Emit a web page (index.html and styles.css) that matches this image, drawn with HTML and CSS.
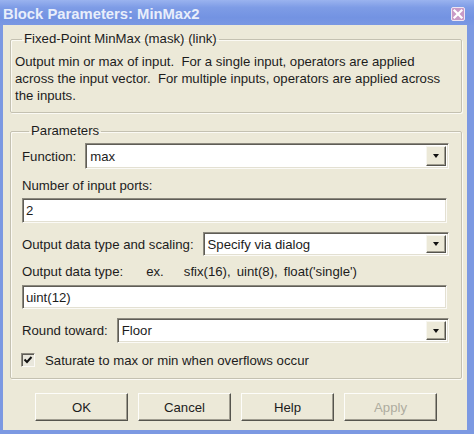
FILE: index.html
```html
<!DOCTYPE html>
<html>
<head>
<meta charset="utf-8">
<link rel="stylesheet" href="styles.css">
</head>
<body>
<div class="window">
  <div class="titlebar">
    <span class="title">Block Parameters: MinMax2</span>
    <span class="close"><svg width="12" height="12" viewBox="0 0 12 12"><path d="M2.5 2.5 L9.5 9.5 M9.5 2.5 L2.5 9.5" stroke="#ffffff" stroke-width="2.2" stroke-linecap="square"/></svg></span>
  </div>
  <div class="client">
    <fieldset class="group group-desc">
      <legend>Fixed-Point MinMax (mask) (link)</legend>
      <p class="desc">Output min or max of input.&nbsp; For a single input, operators are applied<br>across the input vector.&nbsp; For multiple inputs, operators are applied across<br>the inputs.</p>
    </fieldset>
    <fieldset class="group group-params">
      <legend>Parameters</legend>
      <div class="row row-func">
        <span class="lbl">Function:</span>
        <div class="select"><span class="val">max</span><span class="dd"><span class="tri"></span></span></div>
      </div>
      <div class="lbl-line lbl-ports">Number of input ports:</div>
      <div class="input input-ports">2</div>
      <div class="row row-scaling">
        <span class="lbl">Output data type and scaling:</span>
        <div class="select"><span class="val">Specify via dialog</span><span class="dd"><span class="tri"></span></span></div>
      </div>
      <div class="lbl-line lbl-type"><span>Output data type:</span><span class="ex">ex.</span><span class="ex2">sfix(16),</span><span class="ex3">uint(8),</span><span class="ex3">float('single')</span></div>
      <div class="input input-type">uint(12)</div>
      <div class="row row-round">
        <span class="lbl">Round toward:</span>
        <div class="select"><span class="val">Floor</span><span class="dd"><span class="tri"></span></span></div>
      </div>
      <div class="check-row">
        <span class="check"><svg width="10" height="10" viewBox="0 0 10 10"><path d="M1.5 4.5 L4 7 L8.5 2" fill="none" stroke="#111" stroke-width="2"/></svg></span>
        <span class="check-lbl">Saturate to max or min when overflows occur</span>
      </div>
    </fieldset>
    <div class="buttons">
      <span class="btn">OK</span>
      <span class="btn">Cancel</span>
      <span class="btn">Help</span>
      <span class="btn disabled">Apply</span>
    </div>
  </div>
</div>
</body>
</html>
```
FILE: styles.css
```css
html, body {
  margin: 0;
  padding: 0;
}
body {
  width: 474px;
  height: 434px;
  overflow: hidden;
  font-family: "Liberation Sans", Arial, sans-serif;
  font-size: 13.2px;
  color: #1c1c1c;
}
.window {
  width: 474px;
  height: 434px;
  box-sizing: border-box;
  display: flex;
  flex-direction: column;
  background: #7c99e2;
}
.titlebar {
  height: 25px;
  flex: none;
  display: flex;
  align-items: center;
  justify-content: space-between;
  padding: 0 9px 0 3px;
  background: linear-gradient(#9ab3ef 0%, #7e9ce6 30%, #7393e2 70%, #7a98e3 100%);
}
.title {
  font-weight: bold;
  font-size: 14.8px;
  color: #e8eefb;
  letter-spacing: 0;
  margin-top: 2px;
}
.close {
  width: 14px;
  height: 14px;
  box-sizing: border-box;
  border: 1px solid #efe6f2;
  border-radius: 2px;
  background: #c99ac6;
  display: flex;
  align-items: center;
  justify-content: center;
  margin-top: 3px;
}
.client {
  flex: 1;
  margin: 0 7px 4px 3px;
  background: #ece9d8;
  padding: 6px 5px 0 7px;
  display: flex;
  flex-direction: column;
}
.group {
  margin: 0;
  border: 1px solid #c4c1b1;
  box-shadow: inset 1px 1px 0 #fbfaf4, 1px 1px 0 #fbfaf4;
  border-radius: 2px;
  min-width: 0;
}
.group legend {
  margin-left: 7px;
  padding: 0 2px;
  line-height: 16px;
  color: #1c1c1c;
}
.group-desc {
  padding: 6px 4px 8px 4px;
}
.desc {
  margin: 0;
  line-height: 17px;
  white-space: nowrap;
}
.group-params {
  margin-top: 10px;
  padding: 4px 12px 10px 11px;
}
.row {
  display: flex;
  align-items: center;
  gap: 9px;
}
.row-func { height: 26px; }
.row-scaling { height: 24px; margin-top: 9px; }
.row-round { height: 25px; margin-top: 9px; }
.lbl { flex: none; white-space: nowrap; }
.select {
  flex: 1;
  height: 100%;
  box-sizing: border-box;
  display: flex;
  align-items: center;
  background: #ffffff;
  border-top: 1px solid #8c897e;
  border-left: 1px solid #8c897e;
  border-right: 1px solid #fbfaf6;
  border-bottom: 1px solid #fbfaf6;
  box-shadow: inset 1px 1px 0 #5f5d56, inset -1px -1px 0 #e3e0d2;
  padding: 2px;
}
.select .val {
  flex: 1;
  padding-left: 2px;
  white-space: nowrap;
}
.dd {
  flex: none;
  width: 20px;
  height: 100%;
  box-sizing: border-box;
  background: #ece9d8;
  border-top: 1px solid #f7f6f0;
  border-left: 1px solid #f7f6f0;
  border-right: 1px solid #55544d;
  border-bottom: 1px solid #55544d;
  box-shadow: inset -1px -1px 0 #a09d90;
  display: flex;
  align-items: center;
  justify-content: center;
}
.tri {
  width: 0;
  height: 0;
  border-left: 3.5px solid transparent;
  border-right: 3.5px solid transparent;
  border-top: 4px solid #111;
}
.lbl-line {
  line-height: 16px;
  white-space: nowrap;
}
.lbl-ports { margin-top: 9px; }
.lbl-type { margin-top: 8px; display: flex; }
.lbl-type .ex { margin-left: 23px; }
.lbl-type .ex2 { margin-left: 20px; }
.lbl-type .ex3 { margin-left: 6px; }
.input {
  box-sizing: border-box;
  margin-right: 2px;
  background: #ffffff;
  border-top: 1px solid #8c897e;
  border-left: 1px solid #8c897e;
  border-right: 1px solid #fbfaf6;
  border-bottom: 1px solid #fbfaf6;
  box-shadow: inset 1px 1px 0 #5f5d56, inset -1px -1px 0 #e3e0d2;
  padding-left: 3px;
  display: flex;
  align-items: center;
}
.input-ports { height: 25px; margin-top: 4px; }
.input-type { height: 24px; margin-top: 5px; }
.check-row {
  margin-top: 9px;
  height: 16px;
  display: flex;
  align-items: center;
  gap: 10px;
}
.check {
  width: 14px;
  height: 14px;
  box-sizing: border-box;
  margin-left: -1px;
  background: #e9e7dc;
  border-top: 1px solid #8c897e;
  border-left: 1px solid #8c897e;
  border-right: 1px solid #fbfaf6;
  border-bottom: 1px solid #fbfaf6;
  box-shadow: inset 1px 1px 0 #5f5d56;
  display: flex;
  align-items: center;
  justify-content: center;
}
.check-lbl { white-space: nowrap; }
.buttons {
  display: flex;
  gap: 10px;
  margin-top: 14px;
  padding-left: 25px;
}
.btn {
  width: 93px;
  height: 28px;
  box-sizing: border-box;
  display: flex;
  align-items: center;
  justify-content: center;
  background: #ece9d8;
  border-top: 1px solid #fdfdfa;
  border-left: 1px solid #fdfdfa;
  border-right: 1px solid #55544d;
  border-bottom: 1px solid #55544d;
  box-shadow: inset -1px -1px 0 #a09d90;
}
.btn.disabled {
  color: #aeac9f;
}
```
